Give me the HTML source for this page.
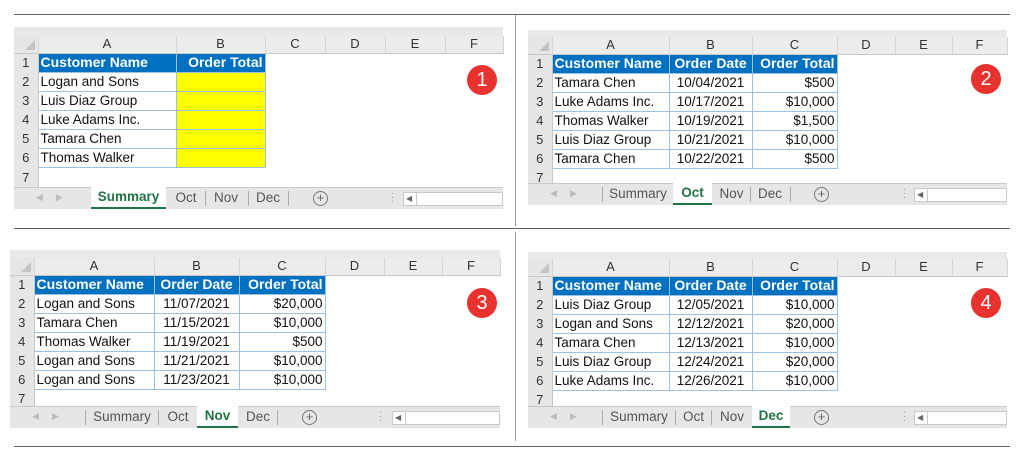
<!DOCTYPE html>
<html><head><meta charset="utf-8"><style>
*{margin:0;padding:0;box-sizing:border-box}
body{width:1024px;height:457px;background:#fff;position:relative;overflow:hidden;font-family:"Liberation Sans",Arial,sans-serif}
.ln{position:absolute;background:#666}
.p{position:absolute;background:#e9e9e9}
table{position:absolute;left:0;border-collapse:collapse;table-layout:fixed;font-size:13.5px;color:#111}
td{white-space:nowrap;overflow:hidden;padding:0 2px;height:19px;line-height:17px;background:#fff}
tr.h td{height:17px;line-height:16px;background:#ececec;color:#333;font-size:13px;text-align:center;border-right:1px solid #d6d6d6;border-bottom:1px solid #c8c8c8}
td.rn{background:#e6e6e6;color:#333;text-align:center;font-size:13px;padding:0;border-right:1px solid #c8c8c8}
tr.h td.cn{background:#e6e6e6;position:relative}
.tri{position:absolute;right:3px;bottom:3px;width:0;height:0;border-left:10px solid transparent;border-bottom:10px solid #c4c4c4}
td.b{background:#0070c0;color:#fff;font-weight:bold;font-size:14px;border-right:1px solid #9bc2e6}
td.d{border:1px solid #9bc2e6}
td.y{background:#ffff00;border:1px solid #9bc2e6}
.r{text-align:right}.c{text-align:center}
.tb{position:absolute;left:0;height:22px;background:#e6e6e6;border-top:1px solid #c8c8c8}
.t{position:absolute;top:0;height:21px;line-height:19px;font-size:13.5px;color:#555;text-align:center}
.s{position:absolute;top:3px;width:1px;height:15px;background:#aaa}
.a{background:#fff;color:#217346;font-weight:bold;border-bottom:2px solid #217346;top:-1px;height:22px}
.ar{position:absolute;top:4px;font-size:9px;color:#bbb}
.pl{position:absolute;top:3px;width:15px;height:15px;border:1px solid #777;border-radius:50%;color:#666;font-size:13px;line-height:12px;text-align:center}
.dt{position:absolute;top:4px;font-size:10px;color:#999;line-height:4px;width:2px}
.sc{position:absolute;top:4px;height:14px;background:#fff;border:1px solid #c8c8c8}
.sc span{position:absolute;left:2px;top:0;font-size:8px;color:#666;line-height:12px}
.sc i{position:absolute;left:12px;top:0;width:1px;height:12px;background:#c8c8c8}
.bd{position:absolute;width:30px;height:30px;border-radius:50%;background:#e8322f;color:#fff;font-size:20px;text-align:center;line-height:30px}
</style></head><body>
<div class="ln" style="left:14px;top:14px;width:996px;height:1px"></div>
<div class="ln" style="left:14px;top:228px;width:996px;height:1px"></div>
<div class="ln" style="left:14px;top:446px;width:996px;height:1px"></div>
<div class="ln" style="left:515px;top:15px;width:1px;height:211px;background:#999"></div>
<div class="ln" style="left:515px;top:232px;width:1px;height:209px;background:#999"></div>

<!-- Panel 1 -->
<div class="p" style="left:14px;top:27px;width:489px;height:182px">
<table style="top:9px;width:489px">
<colgroup><col style="width:24px"><col style="width:138px"><col style="width:89px"><col style="width:60px"><col style="width:60px"><col style="width:60px"><col style="width:58px"></colgroup>
<tr class="h"><td class="cn"><div class="tri"></div></td><td>A</td><td>B</td><td>C</td><td>D</td><td>E</td><td>F</td></tr>
<tr><td class="rn">1</td><td class="b">Customer Name</td><td class="b r">Order Total</td><td></td><td></td><td></td><td></td></tr>
<tr><td class="rn">2</td><td class="d">Logan and Sons</td><td class="y"></td><td></td><td></td><td></td><td></td></tr>
<tr><td class="rn">3</td><td class="d">Luis Diaz Group</td><td class="y"></td><td></td><td></td><td></td><td></td></tr>
<tr><td class="rn">4</td><td class="d">Luke Adams Inc.</td><td class="y"></td><td></td><td></td><td></td><td></td></tr>
<tr><td class="rn">5</td><td class="d">Tamara Chen</td><td class="y"></td><td></td><td></td><td></td><td></td></tr>
<tr><td class="rn">6</td><td class="d">Thomas Walker</td><td class="y"></td><td></td><td></td><td></td><td></td></tr>
<tr><td class="rn" style="height:20px">7</td><td></td><td></td><td></td><td></td><td></td><td></td></tr>
</table>
<div class="tb" style="top:160px;width:489px">
<span class="ar" style="left:22px">◀</span><span class="ar" style="left:42px">▶</span>
<div class="t a" style="left:77px;width:75px">Summary</div>
<div class="t" style="left:154px;width:36px">Oct</div><div class="s" style="left:191px"></div>
<div class="t" style="left:192px;width:40px">Nov</div><div class="s" style="left:234px"></div>
<div class="t" style="left:235px;width:38px">Dec</div><div class="s" style="left:274px"></div>
<div class="pl" style="left:299px">+</div>
<div class="dt" style="left:377px">·<br>·<br>·</div>
<div class="sc" style="left:389px;width:100px"><span>◀</span><i></i></div>
</div>
</div>
<div class="bd" style="left:467px;top:65px">1</div>

<!-- Panel 2 -->
<div class="p" style="left:528px;top:30px;width:479px;height:175px">
<table style="top:7px;width:479px">
<colgroup><col style="width:24px"><col style="width:117px"><col style="width:83px"><col style="width:85px"><col style="width:58px"><col style="width:57px"><col style="width:55px"></colgroup>
<tr class="h"><td class="cn"><div class="tri"></div></td><td>A</td><td>B</td><td>C</td><td>D</td><td>E</td><td>F</td></tr>
<tr><td class="rn">1</td><td class="b">Customer Name</td><td class="b c">Order Date</td><td class="b r">Order Total</td><td></td><td></td><td></td></tr>
<tr><td class="rn">2</td><td class="d">Tamara Chen</td><td class="d c">10/04/2021</td><td class="d r">$500</td><td></td><td></td><td></td></tr>
<tr><td class="rn">3</td><td class="d">Luke Adams Inc.</td><td class="d c">10/17/2021</td><td class="d r">$10,000</td><td></td><td></td><td></td></tr>
<tr><td class="rn">4</td><td class="d">Thomas Walker</td><td class="d c">10/19/2021</td><td class="d r">$1,500</td><td></td><td></td><td></td></tr>
<tr><td class="rn">5</td><td class="d">Luis Diaz Group</td><td class="d c">10/21/2021</td><td class="d r">$10,000</td><td></td><td></td><td></td></tr>
<tr><td class="rn">6</td><td class="d">Tamara Chen</td><td class="d c">10/22/2021</td><td class="d r">$500</td><td></td><td></td><td></td></tr>
<tr><td class="rn" style="height:18px">7</td><td></td><td></td><td></td><td></td><td></td><td></td></tr>
</table>
<div class="tb" style="top:153px;width:479px">
<span class="ar" style="left:22px">◀</span><span class="ar" style="left:42px">▶</span>
<div class="s" style="left:74px"></div>
<div class="t" style="left:75px;width:70px">Summary</div>
<div class="t a" style="left:145px;width:39px">Oct</div>
<div class="t" style="left:185px;width:37px">Nov</div><div class="s" style="left:222px"></div>
<div class="t" style="left:223px;width:38px">Dec</div><div class="s" style="left:262px"></div>
<div class="pl" style="left:286px">+</div>
<div class="dt" style="left:375px">·<br>·<br>·</div>
<div class="sc" style="left:386px;width:93px"><span>◀</span><i></i></div>
</div>
</div>
<div class="bd" style="left:971px;top:64px">2</div>

<!-- Panel 3 -->
<div class="p" style="left:10px;top:250px;width:490px;height:177px">
<table style="top:8px;width:490px">
<colgroup><col style="width:24px"><col style="width:120px"><col style="width:85px"><col style="width:86px"><col style="width:59px"><col style="width:58px"><col style="width:58px"></colgroup>
<tr class="h"><td class="cn"><div class="tri"></div></td><td>A</td><td>B</td><td>C</td><td>D</td><td>E</td><td>F</td></tr>
<tr><td class="rn">1</td><td class="b">Customer Name</td><td class="b c">Order Date</td><td class="b r">Order Total</td><td></td><td></td><td></td></tr>
<tr><td class="rn">2</td><td class="d">Logan and Sons</td><td class="d c">11/07/2021</td><td class="d r">$20,000</td><td></td><td></td><td></td></tr>
<tr><td class="rn">3</td><td class="d">Tamara Chen</td><td class="d c">11/15/2021</td><td class="d r">$10,000</td><td></td><td></td><td></td></tr>
<tr><td class="rn">4</td><td class="d">Thomas Walker</td><td class="d c">11/19/2021</td><td class="d r">$500</td><td></td><td></td><td></td></tr>
<tr><td class="rn">5</td><td class="d">Logan and Sons</td><td class="d c">11/21/2021</td><td class="d r">$10,000</td><td></td><td></td><td></td></tr>
<tr><td class="rn">6</td><td class="d">Logan and Sons</td><td class="d c">11/23/2021</td><td class="d r">$10,000</td><td></td><td></td><td></td></tr>
<tr><td class="rn" style="height:18px">7</td><td></td><td></td><td></td><td></td><td></td><td></td></tr>
</table>
<div class="tb" style="top:156px;width:490px">
<span class="ar" style="left:22px">◀</span><span class="ar" style="left:42px">▶</span>
<div class="s" style="left:75px"></div>
<div class="t" style="left:76px;width:72px">Summary</div><div class="s" style="left:148px"></div>
<div class="t" style="left:149px;width:38px">Oct</div>
<div class="t a" style="left:187px;width:41px">Nov</div>
<div class="t" style="left:229px;width:38px">Dec</div><div class="s" style="left:267px"></div>
<div class="pl" style="left:292px">+</div>
<div class="dt" style="left:369px">·<br>·<br>·</div>
<div class="sc" style="left:382px;width:108px"><span>◀</span><i></i></div>
</div>
</div>
<div class="bd" style="left:467px;top:288px">3</div>

<!-- Panel 4 -->
<div class="p" style="left:528px;top:252px;width:479px;height:174px">
<table style="top:7px;width:479px">
<colgroup><col style="width:24px"><col style="width:117px"><col style="width:83px"><col style="width:85px"><col style="width:58px"><col style="width:57px"><col style="width:55px"></colgroup>
<tr class="h"><td class="cn"><div class="tri"></div></td><td>A</td><td>B</td><td>C</td><td>D</td><td>E</td><td>F</td></tr>
<tr><td class="rn">1</td><td class="b">Customer Name</td><td class="b c">Order Date</td><td class="b r">Order Total</td><td></td><td></td><td></td></tr>
<tr><td class="rn">2</td><td class="d">Luis Diaz Group</td><td class="d c">12/05/2021</td><td class="d r">$10,000</td><td></td><td></td><td></td></tr>
<tr><td class="rn">3</td><td class="d">Logan and Sons</td><td class="d c">12/12/2021</td><td class="d r">$20,000</td><td></td><td></td><td></td></tr>
<tr><td class="rn">4</td><td class="d">Tamara Chen</td><td class="d c">12/13/2021</td><td class="d r">$10,000</td><td></td><td></td><td></td></tr>
<tr><td class="rn">5</td><td class="d">Luis Diaz Group</td><td class="d c">12/24/2021</td><td class="d r">$20,000</td><td></td><td></td><td></td></tr>
<tr><td class="rn">6</td><td class="d">Luke Adams Inc.</td><td class="d c">12/26/2021</td><td class="d r">$10,000</td><td></td><td></td><td></td></tr>
<tr><td class="rn" style="height:18px">7</td><td></td><td></td><td></td><td></td><td></td><td></td></tr>
</table>
<div class="tb" style="top:154px;width:479px">
<span class="ar" style="left:22px">◀</span><span class="ar" style="left:42px">▶</span>
<div class="s" style="left:74px"></div>
<div class="t" style="left:75px;width:72px">Summary</div><div class="s" style="left:147px"></div>
<div class="t" style="left:148px;width:35px">Oct</div><div class="s" style="left:183px"></div>
<div class="t" style="left:184px;width:40px">Nov</div>
<div class="t a" style="left:224px;width:38px">Dec</div>
<div class="pl" style="left:286px">+</div>
<div class="dt" style="left:375px">·<br>·<br>·</div>
<div class="sc" style="left:386px;width:93px"><span>◀</span><i></i></div>
</div>
</div>
<div class="bd" style="left:971px;top:288px">4</div>
</body></html>
